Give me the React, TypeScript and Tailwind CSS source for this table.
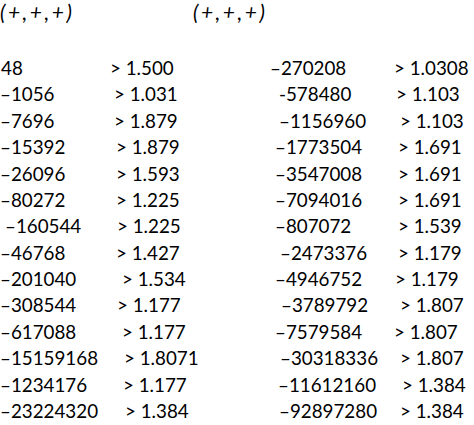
const ROWS: [string, string, string, string, string, string, string, string][] = [
  ["48", "pl-[1px]", "> 1.500", "pl-[10px]", "–270208", "pl-[33px]", "> 1.0308", "pl-[14px]"],
  ["–1056", "pl-0", "> 1.031", "pl-[14px]", "-578480", "pl-[42px]", "> 1.103", "pl-[16px]"],
  ["–7696", "pl-0", "> 1.879", "pl-[14px]", "–1156960", "pl-[42px]", "> 1.103", "pl-[20px]"],
  ["–15392", "pl-0", "> 1.879", "pl-[16px]", "–1773504", "pl-[38px]", "> 1.691", "pl-[18px]"],
  ["–26096", "pl-0", "> 1.593", "pl-[16px]", "–3547008", "pl-[38px]", "> 1.691", "pl-[18px]"],
  ["–80272", "pl-0", "> 1.225", "pl-[16px]", "–7094016", "pl-[38px]", "> 1.691", "pl-[18px]"],
  ["–160544", "pl-[5px]", "> 1.225", "pl-[17px]", "–807072", "pl-[38px]", "> 1.539", "pl-[18px]"],
  ["–46768", "pl-0", "> 1.427", "pl-[16px]", "–2473376", "pl-[43px]", "> 1.179", "pl-[18px]"],
  ["–201040", "pl-0", "> 1.534", "pl-[22px]", "–4946752", "pl-[38px]", "> 1.179", "pl-[15px]"],
  ["–308544", "pl-0", "> 1.177", "pl-[17px]", "–3789792", "pl-[44px]", "> 1.807", "pl-[20px]"],
  ["–617088", "pl-0", "> 1.177", "pl-[22px]", "–7579584", "pl-[38px]", "> 1.807", "pl-[14px]"],
  ["–15159168", "pl-0", "> 1.8071", "pl-[24px]", "–30318336", "pl-[43px]", "> 1.807", "pl-[20px]"],
  ["–1234176", "pl-0", "> 1.177", "pl-[23px]", "–11612160", "pl-[41px]", "> 1.384", "pl-[22px]"],
  ["–23224320", "pl-0", "> 1.384", "pl-[25px]", "–92897280", "pl-[42px]", "> 1.384", "pl-[20px]"],
];

export default function App() {
  return (
    <div className="h-[425px] w-[474px] overflow-hidden bg-white text-[18.8px] text-black [font-family:Lato,'Open_Sans',sans-serif]">
      {/* sign headers */}
      <div className="flex h-[24px] items-center text-[21px] leading-[24px] italic">
        <span className="w-[193px] tracking-[2.5px]">(+,+,+)</span>
        <span className="tracking-[2.5px]">(+,+,+)</span>
      </div>

      <div className="mt-[31px] flex flex-col">
        {ROWS.map(([a, pa, b, pb, c, pc, d, pd], i) => (
          <div key={i} className="flex h-[26.38px] items-center leading-[26.38px] whitespace-nowrap">
            <span className={`w-[100px] ${pa}`}>{a}</span>
            <span className={`w-[137px] ${pb}`}>{b}</span>
            <span className={`w-[143px] ${pc}`}>{c}</span>
            <span className={`w-[94px] ${pd}`}>{d}</span>
          </div>
        ))}
      </div>
    </div>
  );
}
